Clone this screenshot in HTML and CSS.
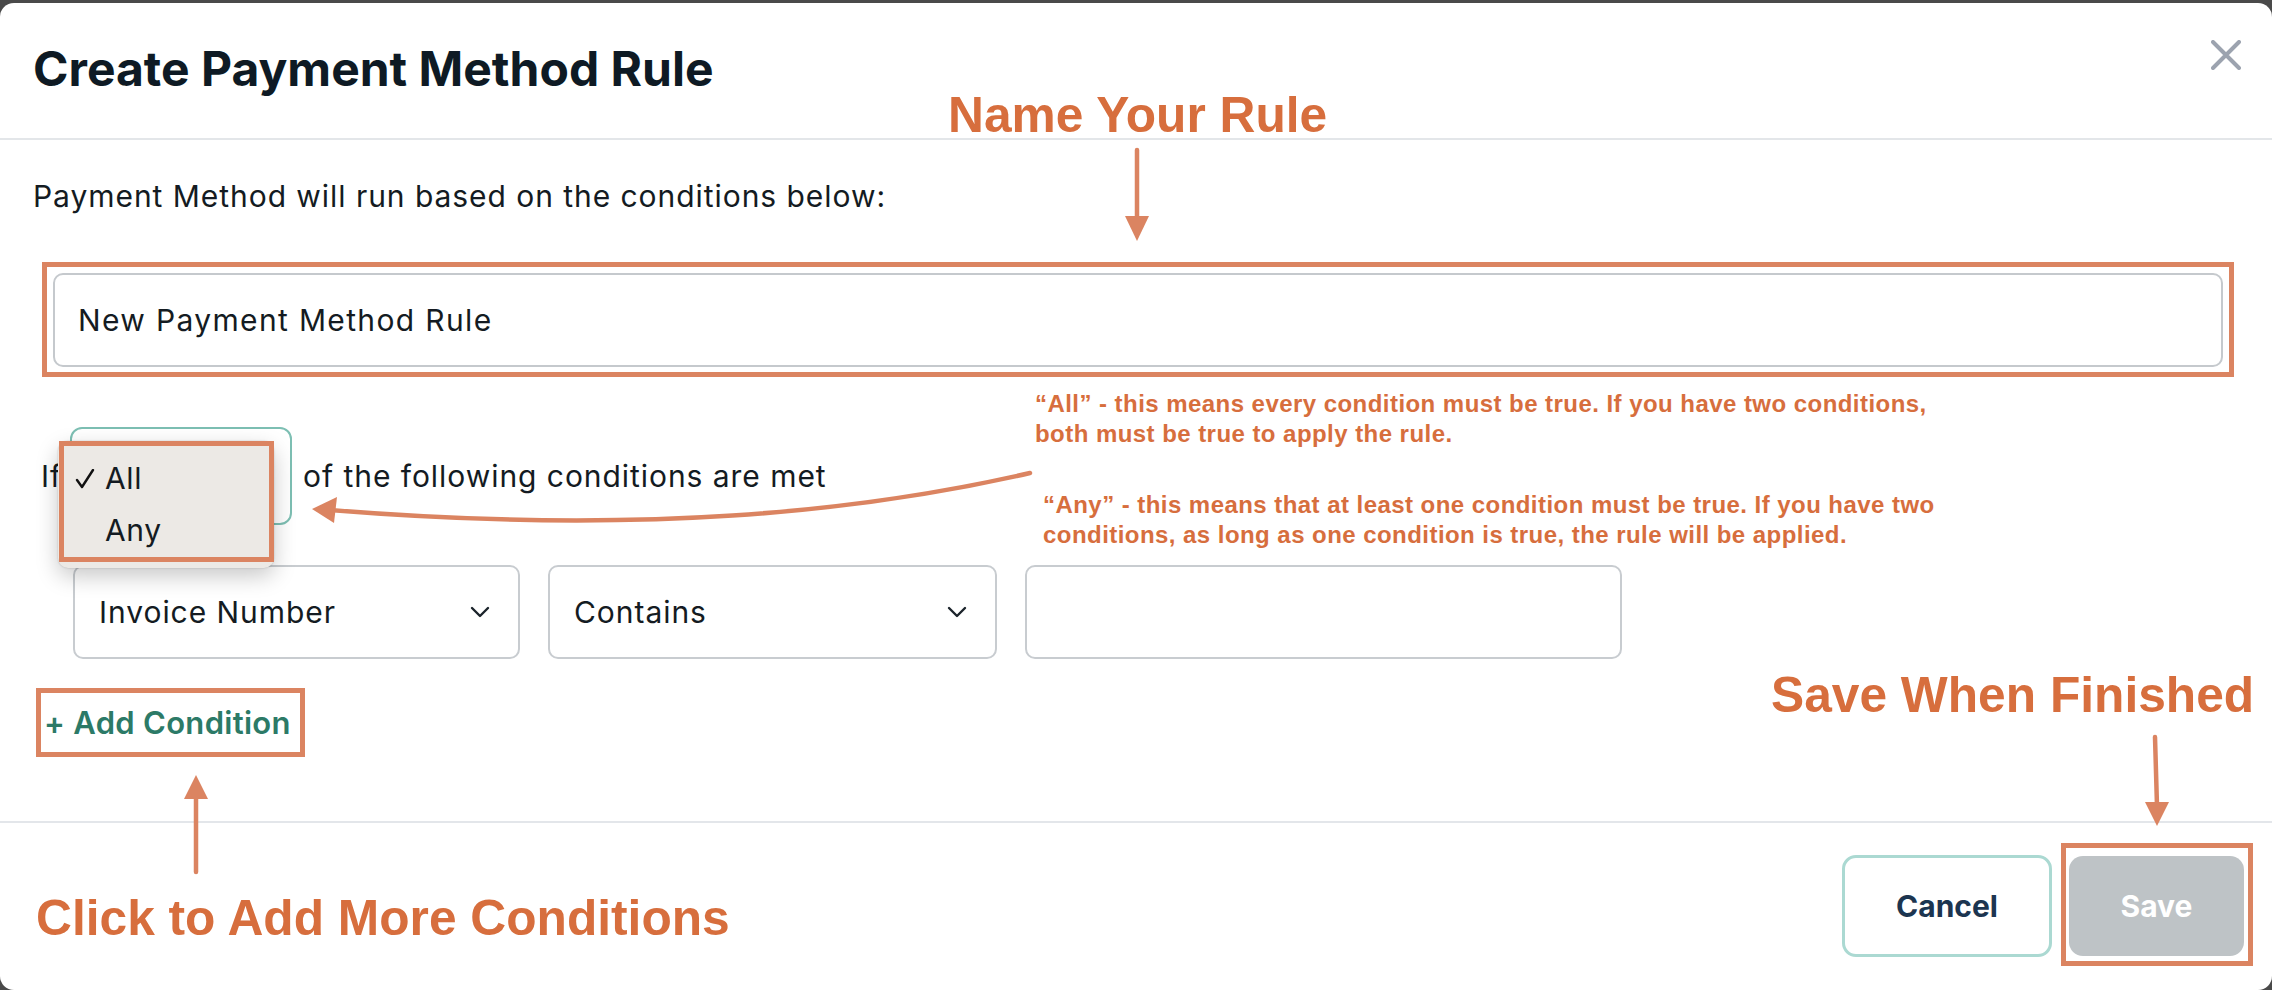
FILE: index.html
```html
<!DOCTYPE html>
<html lang="en">
<head>
<meta charset="utf-8">
<title>Create Payment Method Rule</title>
<link rel="stylesheet" href="styles.css">
</head>
<body>
<div class="modal">
  <header class="modal-header">
    <h1 class="modal-title">Create Payment Method Rule</h1>
    <button class="close-btn" aria-label="Close">
      <svg width="30" height="30" viewBox="0 0 30 30"><path d="M2 2 L28 28 M28 2 L2 28" stroke="#9ca3af" stroke-width="4" stroke-linecap="round" fill="none"/></svg>
    </button>
  </header>
  <div class="modal-body">
    <p class="intro">Payment Method will run based on the conditions below:</p>
    <div class="name-field">New Payment Method Rule</div>
    <div class="match-row">
      <span class="match-if">If</span>
      <span class="match-select"></span>
      <span class="match-text">of the following conditions are met</span>
    </div>
    <div class="condition-row">
      <div class="field select-field field-a"><span>Invoice Number</span>
        <svg class="chev" width="20" height="12" viewBox="0 0 20 12"><path d="M2 2 L10 10 L18 2" stroke="#1b232b" stroke-width="2.4" fill="none" stroke-linecap="round" stroke-linejoin="round"/></svg>
      </div>
      <div class="field select-field field-b"><span>Contains</span>
        <svg class="chev" width="20" height="12" viewBox="0 0 20 12"><path d="M2 2 L10 10 L18 2" stroke="#1b232b" stroke-width="2.4" fill="none" stroke-linecap="round" stroke-linejoin="round"/></svg>
      </div>
      <div class="field field-c"></div>
    </div>
    <div class="add-row"><button class="add-condition">+ Add Condition</button></div>
  </div>
  <footer class="modal-footer">
    <button class="btn btn-cancel">Cancel</button>
    <button class="btn btn-save">Save</button>
  </footer>

  <div class="menu">
    <div class="menu-item"><svg class="check" width="20" height="20" viewBox="0 0 20 20"><path d="M2 11 L7 18 L18 1" stroke="#111" stroke-width="2.4" fill="none" stroke-linecap="round" stroke-linejoin="round"/></svg>All</div>
    <div class="menu-item">Any</div>
  </div>
</div>

<div class="annot-box box-name"></div>
<div class="annot-box box-menu"></div>
<div class="annot-box box-add"></div>
<div class="annot-box box-save"></div>

<div class="annot-title title-name">Name Your Rule</div>
<div class="annot-title title-add">Click to Add More Conditions</div>
<div class="annot-title title-save">Save When Finished</div>
<div class="annot-note note-all">“All” - this means every condition must be true. If you have two conditions,<br>both must be true to apply the rule.</div>
<div class="annot-note note-any">“Any” - this means that at least one condition must be true. If you have two<br>conditions, as long as one condition is true, the rule will be applied.</div>

<svg class="arrows" width="2272" height="990" viewBox="0 0 2272 990">
  <g stroke="#db8461" stroke-width="4.5" fill="none" stroke-linecap="round">
    <path d="M1137 150 L1137 222"/>
    <path d="M1030 473 C 860 512, 640 535, 330 510"/>
    <path d="M196 795 L196 872"/>
    <path d="M2155 737 L2157 806"/>
  </g>
  <g fill="#db8461">
    <polygon points="1125,216 1149,216 1137,241"/>
    <polygon points="312,509 337,497 334,523"/>
    <polygon points="184,799 208,799 196,775"/>
    <polygon points="2145,802 2169,802 2157,826"/>
  </g>
</svg>
</body>
</html>
```

FILE: styles.css
```css
html, body {
  margin: 0;
  padding: 0;
}
body {
  width: 2272px;
  height: 990px;
  overflow: hidden;
  background: #4a4a4a;
  position: relative;
  font-family: Inter, "Noto Sans", sans-serif;
  color: #141b22;
}
.modal {
  margin-top: 3px;
  height: 987px;
  background: #fff;
  border-radius: 14px;
  display: flex;
  flex-direction: column;
  position: relative;
  box-sizing: border-box;
}
.modal-header {
  height: 137px;
  box-sizing: border-box;
  border-bottom: 2px solid #e3e6e9;
  display: flex;
  justify-content: space-between;
  align-items: flex-start;
  padding: 37px 31px 0 33px;
}
.modal-title {
  margin: 0;
  font-size: 48px;
  line-height: 58px;
  font-weight: 700;
  color: #0e1a24;
  letter-spacing: 0;
}
.close-btn {
  border: 0;
  background: none;
  padding: 0;
  margin-top: 0;
  width: 30px;
  height: 30px;
  display: flex;
}
.modal-body {
  flex: 1;
  padding: 0 49px 0 33px;
}
.intro {
  margin: 36px 0 0 0;
  font-size: 30px;
  line-height: 40px;
  letter-spacing: 0.95px;
}
.name-field {
  margin: 57px 0 0 20px;
  height: 94px;
  box-sizing: border-box;
  border: 2px solid #c5c9cd;
  border-radius: 10px;
  display: flex;
  align-items: center;
  padding-left: 23px;
  font-size: 30px;
  letter-spacing: 1.35px;
}
.match-row {
  margin-top: 60px;
  display: flex;
  align-items: center;
  font-size: 30px;
  letter-spacing: 0.95px;
  padding-left: 8px;
}
.match-select {
  width: 222px;
  height: 98px;
  box-sizing: border-box;
  border: 2px solid #7dbfb3;
  border-radius: 12px;
  margin: 0 11px 0 8px;
}
.condition-row {
  margin: 40px 0 0 40px;
  display: flex;
  gap: 28px;
}
.field {
  height: 94px;
  box-sizing: border-box;
  border: 2px solid #c8ccd0;
  border-radius: 10px;
  display: flex;
  align-items: center;
  justify-content: space-between;
  padding: 0 28px 0 24px;
  font-size: 30px;
  letter-spacing: 0.95px;
  background: #fff;
}
.field-a { width: 447px; }
.field-b { width: 449px; }
.field-c { width: 597px; }
.add-row {
  margin-top: 44px;
}
.add-condition {
  border: 0;
  background: none;
  padding: 0 0 0 11px;
  font-family: Inter, "Noto Sans", sans-serif;
  font-size: 31px;
  line-height: 40px;
  font-weight: 600;
  letter-spacing: 0.3px;
  color: #2c7a67;
}
.modal-footer {
  height: 169px;
  box-sizing: border-box;
  border-top: 2px solid #e3e6ea;
  display: flex;
  justify-content: flex-end;
  align-items: flex-start;
  gap: 17px;
  padding: 32px 28px 0 0;
}
.btn {
  font-family: Inter, "Noto Sans", sans-serif;
  font-size: 30px;
  font-weight: 700;
  border-radius: 14px;
  box-sizing: border-box;
}
.btn-cancel {
  width: 210px;
  height: 102px;
  background: #fff;
  border: 3px solid #abd9d2;
  color: #1c3550;
}
.btn-save {
  width: 175px;
  height: 100px;
  margin-top: 1px;
  background: #bec3c6;
  border: 0;
  color: #fff;
}
.menu {
  position: absolute;
  left: 58px;
  top: 438px;
  width: 216px;
  height: 127px;
  background: #ece9e5;
  border-radius: 10px;
  box-shadow: 0 8px 22px rgba(0, 0, 0, 0.22), 0 0 2px rgba(0, 0, 0, 0.2);
  padding-top: 11px;
  box-sizing: border-box;
}
.menu-item {
  height: 52px;
  display: flex;
  align-items: center;
  padding-left: 47px;
  font-size: 30px;
  letter-spacing: 0.6px;
  position: relative;
}
.check {
  position: absolute;
  left: 17px;
  top: 17px;
}

/* annotations */
.annot-box {
  position: absolute;
  border: 5px solid #db8461;
  box-sizing: border-box;
}
.box-name { left: 42px; top: 262px; width: 2192px; height: 115px; }
.box-menu { left: 59px; top: 441px; width: 215px; height: 121px; }
.box-add { left: 36px; top: 688px; width: 269px; height: 69px; }
.box-save { left: 2061px; top: 843px; width: 192px; height: 123px; }

.annot-title {
  position: absolute;
  font-family: "Liberation Sans", Arial, sans-serif;
  font-weight: 700;
  font-size: 49.7px;
  line-height: 49.7px;
  color: #d76e3d;
  white-space: nowrap;
}
.title-name { left: 948px; top: 91px; }
.title-add { left: 36px; top: 894px; }
.title-save { left: 1771px; top: 671px; }

.annot-note {
  position: absolute;
  font-family: "Liberation Sans", Arial, sans-serif;
  font-weight: 700;
  font-size: 24px;
  line-height: 29.5px;
  letter-spacing: 0.45px;
  color: #d76e3d;
  white-space: nowrap;
}
.note-all { left: 1035px; top: 389px; }
.note-any { left: 1043px; top: 490px; }

.arrows {
  position: absolute;
  left: 0;
  top: 0;
}
```
